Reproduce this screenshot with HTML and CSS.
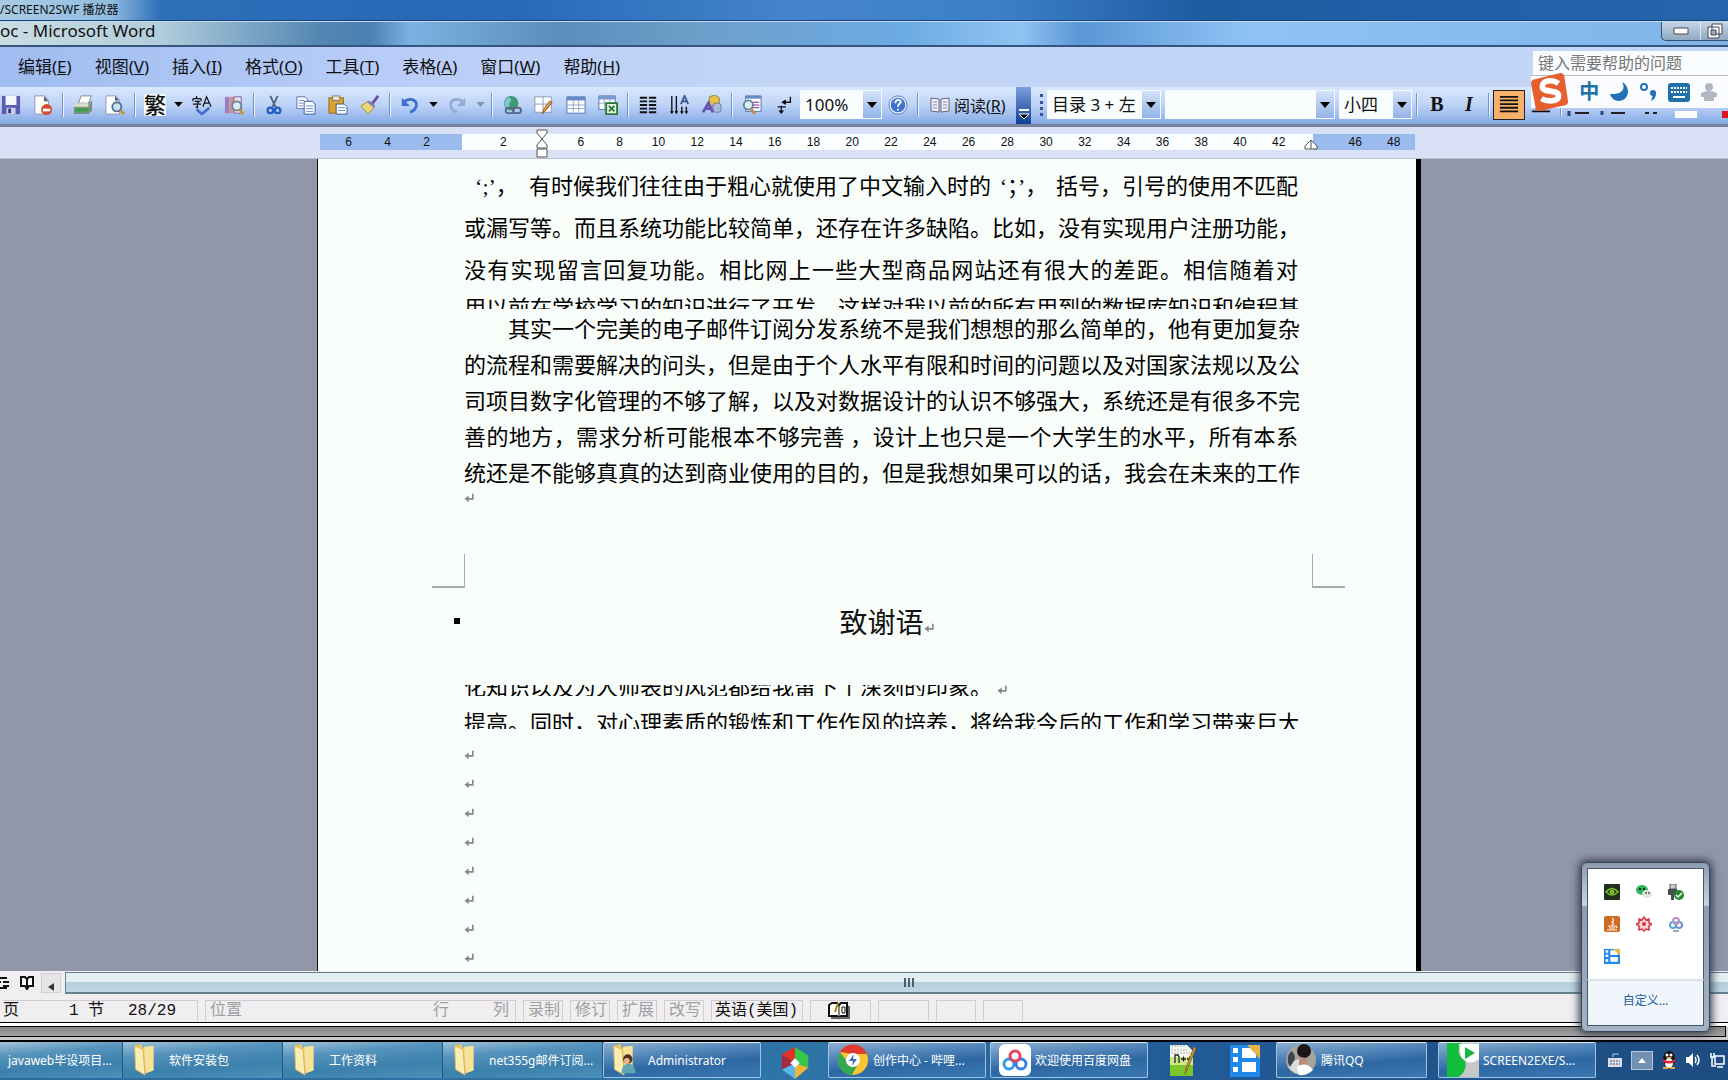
FILE: index.html
```html
<!DOCTYPE html>
<html lang="zh-CN">
<head>
  <meta charset="UTF-8" />
  <meta name="viewport" content="width=device-width, initial-scale=1.0" />
  <title>Microsoft Word</title>
  <link rel="stylesheet" href="styles.css">
</head>
<body>
  <svg class="defs" aria-hidden="true">
    <symbol id="mark" viewBox="0 0 12 12"><path d="M10 1v6H3" fill="none" stroke="#888" stroke-width="2"/><path d="M0 7l5-4v8z" fill="#888"/></symbol>
    <symbol id="down" viewBox="0 0 10 6"><path d="M0 0h10L5 6z"/></symbol>
    <symbol id="folder" viewBox="0 0 24 36">
      <path d="M1 3l8-2v4l12-1v25l-9 3z" fill="#e9c767"/>
      <path d="M11 4l10-1v26l-8 3z" fill="#f7e29a"/>
      <path d="M1 3l9 4 2 27-10-6z" fill="#fbeeb5" stroke="#d9b559"/>
    </symbol>
    <symbol id="npp" viewBox="0 0 28 34">
      <path d="M1 2h17l6 6v25H1z" fill="#f5f9f0"/><path d="M1 21h23v12H1z" fill="#7cc62b"/><path d="M1 14h23v8H1z" fill="#cbe88b"/>
      <path d="M2 3h15M2 7h16M2 10h20" stroke="#aab" stroke-dasharray="2 1"/>
      <path d="M6 20v-8h3l1 2v6M12 16h5m-2.500-2.500v5M18 16h5m-2.500-2.500v5" fill="none" stroke="#222" stroke-width="1.300"/>
      <path d="M27 5l-9 22-2 4 1-6 8-21z" fill="#dba63a" stroke="#8a6420"/>
    </symbol>
    <symbol id="film" viewBox="0 0 30 34">
      <path d="M0 2h30v32H0z" fill="#2088e8"/><path d="M12 5h14v10H12zM12 19h14v10H12z" fill="#fff"/>
      <path d="M3 5h5v5H3zM3 14h5v5H3zM3 24h5v5H3z" fill="#fff"/><path d="M17 2h13v14z" fill="#e8b448"/>
    </symbol>
  </svg>

  <header class="player-title">/SCREEN2SWF 播放器</header>
  <header class="word-title">
    <span>oc - Microsoft Word</span>
    <div class="window-buttons">
      <button aria-label="最小化"><svg width="16" height="8"><path d="M1 1h14v6H1z" fill="#fff" stroke="#445"/></svg></button>
      <button aria-label="还原"><svg width="16" height="16"><path d="M5 1h10v10H5zM1 4h11v11H1z" fill="#fff" stroke="#445"/><path d="M4 7h5v5H4z" fill="#9ab" stroke="#445"/></svg></button>
    </div>
  </header>

  <nav class="menu">
    <button>编辑(<u>E</u>)</button>
    <button>视图(<u>V</u>)</button>
    <button>插入(<u>I</u>)</button>
    <button>格式(<u>O</u>)</button>
    <button>工具(<u>T</u>)</button>
    <button>表格(<u>A</u>)</button>
    <button>窗口(<u>W</u>)</button>
    <button>帮助(<u>H</u>)</button>
    <input class="ask" type="text" aria-label="帮助" placeholder="键入需要帮助的问题">
  </nav>

  <div class="toolbar">
    <button class="tool" aria-label="保存"><svg viewBox="0 0 22 22"><path d="M1 1h20v20H1z" fill="#5a5cb4"/><path d="M5 1h12v10H5z" fill="#f4f6ff"/><path d="M6 14h10v7H6z" fill="#c9cde8"/><path d="M8 15h3v5H8z" fill="#33357c"/></svg></button>
    <button class="tool" aria-label="权限"><svg viewBox="0 0 22 22"><path d="M2 1h11l4 5v15H2z" fill="#fff" stroke="#8b93a8"/><path d="M12 1v6h5z" fill="#54617d"/><circle cx="15" cy="16" r="6" fill="#d8482f"/><path d="M11 15h8v3h-8z" fill="#fff"/></svg></button>
    <i class="sep"></i>
    <button class="tool" aria-label="打印"><svg viewBox="0 0 22 22"><path d="M6 9l3-8h11l-3 8z" fill="#fff" stroke="#788"/><path d="M1 9h16l4-3v11l-4 4H1z" fill="#79907c"/><path d="M1 9h16v4H1z" fill="#d7e0d0"/><path d="M3 15h13v3H3z" fill="#2da443"/></svg></button>
    <button class="tool" aria-label="打印预览"><svg viewBox="0 0 22 22"><path d="M1 1h11l4 5v15H1z" fill="#fff" stroke="#8b93a8"/><path d="M11 1v5h5z" fill="#54617d"/><circle cx="13" cy="13" r="5" fill="#c5e3f3" stroke="#55708f" stroke-width="2"/><path d="M17 17l4 4" stroke="#c9952e" stroke-width="3"/></svg></button>
    <i class="sep"></i>
    <button class="tool"><span class="trad">繁</span></button>
    <svg class="drop"><use href="#down"/></svg>
    <button class="tool" aria-label="拼音指南"><svg viewBox="0 0 22 22"><path d="M1 4h9M5 1v3M1 4v3M10 4v3M3 7h5L6 9v5l-2-1M1 10h9M12 13l4-11 5 11M13 9h6" fill="none" stroke="#111" stroke-width="1.3"/><path d="M5 16l6 5 8-7" fill="none" stroke="#3d70d2" stroke-width="3"/></svg></button>
    <button class="tool" aria-label="信息检索"><svg viewBox="0 0 22 22"><path d="M1 2h5v18H1z" fill="#9b7cc0"/><path d="M6 2h5v18H6z" fill="#d0948e"/><path d="M11 2h8v18h-8z" fill="#e3e3e8" stroke="#859"/><circle cx="14" cy="12" r="5" fill="#d5eaf5" stroke="#6a7e9d" stroke-width="2"/><path d="M17 16l4 5" stroke="#c9952e" stroke-width="3"/></svg></button>
    <i class="sep"></i>
    <button class="tool" aria-label="剪切"><svg viewBox="0 0 22 22"><path d="M7 1l6 13M15 1L9 14" stroke="#4b6680" stroke-width="2"/><circle cx="7" cy="17" r="3" fill="none" stroke="#225fc2" stroke-width="2.5"/><circle cx="15" cy="17" r="3" fill="none" stroke="#225fc2" stroke-width="2.5"/></svg></button>
    <button class="tool" aria-label="复制"><svg viewBox="0 0 22 22"><path d="M1 2h9l3 3v10H1z" fill="#fff" stroke="#4d69ad"/><path d="M9 7h9l3 3v11H9z" fill="#fff" stroke="#2f4f9e"/><path d="M3 6h6M3 9h5M3 12h5M11 12h8M11 15h8M11 18h8" stroke="#5f86cf"/></svg></button>
    <button class="tool" aria-label="粘贴"><svg viewBox="0 0 22 22"><path d="M1 3h16v17H1z" fill="#d8a431" stroke="#8b6518"/><path d="M5 1h8v5H5z" fill="#e9e3cf" stroke="#776"/><path d="M9 10h9l3 3v8H9z" fill="#fff" stroke="#34508d"/><path d="M11 14h8M11 17h8" stroke="#5f86cf"/></svg></button>
    <button class="tool" aria-label="格式刷"><svg viewBox="0 0 22 22"><path d="M20 1l-7 9" stroke="#6d4ca8" stroke-width="3"/><path d="M9 7l7 6-7 8-8-9z" fill="#ecd77a" stroke="#a78932"/><path d="M9 7l7 6" stroke="#7f8aa0" stroke-width="3"/></svg></button>
    <i class="sep"></i>
    <button class="tool" aria-label="撤消"><svg viewBox="0 0 22 22"><path d="M4 8c6-6 15-3 14 4-1 4-4 6-7 7" fill="none" stroke="#3b6fd0" stroke-width="3"/><path d="M2 3v9h9z" fill="#3b6fd0"/></svg></button>
    <svg class="drop"><use href="#down"/></svg>
    <button class="tool" aria-label="恢复"><svg viewBox="0 0 22 22"><path d="M18 8C12 2 3 5 4 12c1 4 4 6 7 7" fill="none" stroke="#94abd3" stroke-width="3"/><path d="M20 3v9h-9z" fill="#94abd3"/></svg></button>
    <svg class="drop dim"><use href="#down"/></svg>
    <i class="sep"></i>
    <button class="tool" aria-label="超链接"><svg viewBox="0 0 22 22"><circle cx="10" cy="9" r="8" fill="#3f9a72"/><path d="M4 5c4-5 8 0 5 3s2 5-2 7C3 14 1 9 4 5z" fill="#7ac7d6"/><rect x="4" y="14" width="9" height="6" rx="3" fill="none" stroke="#566a86" stroke-width="2"/><rect x="12" y="14" width="9" height="6" rx="3" fill="none" stroke="#566a86" stroke-width="2"/></svg></button>
    <button class="tool" aria-label="表格和边框"><svg viewBox="0 0 22 22"><path d="M1 2h18v17H1zM10 2v17M1 10h18" fill="#fff" stroke="#8797b4"/><path d="M20 8l-7 9-4 4 2-6 6-8z" fill="#e2a03b" stroke="#884b2b"/></svg></button>
    <button class="tool" aria-label="插入表格"><svg viewBox="0 0 22 22"><path d="M1 2h20v18H1z" fill="#fff" stroke="#5070a8"/><path d="M1 2h20v4H1z" fill="#648bd0"/><path d="M1 11h20M1 15h20M8 6v14M14 6v14" stroke="#8ba3cb"/></svg></button>
    <button class="tool" aria-label="插入 Excel 表格"><svg viewBox="0 0 22 22"><path d="M1 1h18v15H1z" fill="#fff" stroke="#5070a8"/><path d="M1 1h18v4H1z" fill="#7b9ad0"/><path d="M1 9h18M7 5v11M13 5v11" stroke="#8ba3cb"/><path d="M9 9h12v12H9z" fill="#e7f4e5" stroke="#267a33" stroke-width="2"/><path d="M12 12l6 6M18 12l-6 6" stroke="#267a33" stroke-width="2"/></svg></button>
    <i class="sep"></i>
    <button class="tool" aria-label="分栏"><svg viewBox="0 0 22 22"><path d="M2 3h8M2 7h8M2 11h8M2 15h8M2 19h8M12 3h8M12 7h8M12 11h8M12 15h8M12 19h8" stroke="#111" stroke-width="2"/></svg></button>
    <button class="tool" aria-label="更改文字方向"><svg viewBox="0 0 22 22"><path d="M2 1v19M7 1v19M13 13v7M18 13v7" stroke="#111" stroke-width="1.5"/><path d="M0 18h4l-2 3zM5 18h4l-2 3zM11 18h4l-2 3zM16 18h4l-2 3z"/><path d="M12 10l4-9 4 9M13 7h6" fill="none" stroke="#3a5790" stroke-width="2"/></svg></button>
    <button class="tool" aria-label="绘图"><svg viewBox="0 0 22 22"><path d="M8 2l6-2 5 3v9H8z" fill="#e4c14c" stroke="#9a7b29"/><rect x="12" y="9" width="9" height="10" rx="3" fill="#a9b9da" stroke="#66779c"/><path d="M1 19L7 9l5 10M3 15h7" fill="none" stroke="#6a52bb" stroke-width="3"/></svg></button>
    <i class="sep"></i>
    <button class="tool" aria-label="文档结构图"><svg viewBox="0 0 22 22"><path d="M4 1h17v17H4z" fill="#fff" stroke="#4d6ea7"/><path d="M4 1h17v3H4z" fill="#638ac6"/><path d="M12 8h7M12 11h7M12 14h7" stroke="#718"/><circle cx="7" cy="11" r="5" fill="#d9eef5" stroke="#5d829a" stroke-width="2"/><path d="M10 15l4 6" stroke="#bf9140" stroke-width="3"/></svg></button>
    <button class="tool" aria-label="显示编辑标记"><svg viewBox="0 0 22 22"><path d="M18 2v6h-7M8 12v6M4 13h9" fill="none" stroke="#111" stroke-width="1.500"/><path d="M8 8l5-3v6zM8 21l-3-4h6z"/></svg></button>
    <div class="combo zoom"><select aria-label="显示比例"><option>100%</option></select><span><svg class="arrow"><use href="#down"/></svg></span></div>
    <button class="tool" aria-label="帮助"><svg viewBox="0 0 22 22"><circle cx="11" cy="11" r="9" fill="#3d72cf" stroke="#e9f2ff" stroke-width="2"/><circle cx="11" cy="11" r="10" fill="none" stroke="#4f79b8"/><path d="M8 9c0-5 7-4 6-1-1 2-3 2-3 5M11 15v2" fill="none" stroke="#fff" stroke-width="2"/></svg></button>
    <i class="sep"></i>
    <button class="read"><svg viewBox="0 0 20 18"><path d="M1 2l8 1v13l-8-1zM19 2l-8 1v13l8-1z" fill="#eef" stroke="#667"/><path d="M3 6h4M3 9h4M3 12h4M13 6h4M13 9h4M13 12h4" stroke="#889"/></svg><span>阅读(<u>R</u>)</span></button>
    <button class="overflow" aria-label="工具栏选项"><svg width="10" height="11"><path d="M0 1h10" stroke="#fff" stroke-width="2"/><path d="M0 5h10l-5 5z" stroke="#fff"/></svg></button>
    <i class="grip"></i>
    <div class="combo style"><select aria-label="样式"><option>目录 3 + 左</option></select><span><svg class="arrow"><use href="#down"/></svg></span></div>
    <div class="combo font"><select aria-label="字体"><option></option></select><span><svg class="arrow"><use href="#down"/></svg></span></div>
    <div class="combo size"><select aria-label="字号"><option>小四</option></select><span><svg class="arrow"><use href="#down"/></svg></span></div>
    <i class="sep"></i>
    <button class="tool bold">B</button>
    <button class="tool italic">I</button>
    <i class="sep"></i>
    <button class="tool active" aria-label="两端对齐"><svg viewBox="0 0 22 22"><path d="M1 2h20M1 6h20M1 10h20M1 14h20M1 18h20" stroke="#111" stroke-width="2"/></svg></button>
    <button class="tool" aria-label="居中"><svg viewBox="0 0 22 22"><path d="M1 2h20M5 6h12M1 10h20M5 14h12M1 18h20" stroke="#111" stroke-width="2"/></svg></button>
    <i class="sep"></i>
    <svg class="hidden-tools" width="170" height="12"><path d="M10 3h14M46 3h14M80 3h4M88 3h4" stroke="#222" stroke-width="2"/><path d="M4 1v5M37 1v4" stroke="#347" stroke-width="3"/><path d="M110 1h22v7h-22z" fill="#fff"/><path d="M157 1h13v7h-13z" fill="#dc1420"/></svg>
  </div>

  <div class="ime">
    <svg class="sogou" viewBox="0 0 40 42"><path d="M2 8L31 1q3 0 4 3l4 27q0 3-3 4L9 41q-3 0-4-3L0 12q0-3 2-4z" fill="#e5602e"/><path d="M29 12c-7-5-18-3-17 4 1 6 17 2 17 9 0 6-11 7-18 3" fill="none" stroke="#fff" stroke-width="6"/></svg>
    <b>中</b>
    <svg width="20" height="22"><path d="M13 1c4 7 0 13-12 12 3 10 17 9 18-2 0-4-2-8-6-10z" fill="#2270b8"/></svg>
    <svg width="18" height="20"><circle cx="4" cy="5" r="3" fill="none" stroke="#2270b8" stroke-width="2"/><circle cx="13" cy="11" r="3" fill="#2270b8"/><path d="M16 11q0 6-5 8l2-6z" fill="#2270b8"/></svg>
    <svg width="22" height="19"><rect width="22" height="19" rx="3" fill="#2270a8"/><path d="M3 5h16M3 9h16" stroke="#fff" stroke-width="2" stroke-dasharray="2 1"/><path d="M5 14h12" stroke="#fff" stroke-width="2"/></svg>
    <svg width="18" height="20"><circle cx="9" cy="5" r="4" fill="#b3b7c4"/><path d="M1 11q8-4 16 0v4h-3v4H4v-4H1z" fill="#b3b7c4"/></svg>
  </div>

  <div class="ruler">
    <div class="scale">
      <div class="outside before"><span>6</span><span>4</span><span>2</span></div>
      <div class="inside">
        <span>2</span>
        <span class="indent"><svg width="12" height="29"><path d="M1 1h10v3L6 10 1 4zM1 19v-3l5-6 5 6v3zM1 20h10v8H1z" fill="#fff" stroke="#555"/></svg></span>
        <span>6</span><span>8</span><span>10</span><span>12</span><span>14</span><span>16</span><span>18</span><span>20</span><span>22</span><span>24</span><span>26</span><span>28</span><span>30</span><span>32</span><span>34</span><span>36</span><span>38</span><span>40</span><span>42</span>
      </div>
      <div class="outside after"><svg class="right-indent" width="14" height="11"><path d="M1 10V7l6-6 6 6v3z" fill="#fff" stroke="#555"/><path d="M7 1v9" stroke="#555"/></svg><span>46</span><span>48</span></div>
    </div>
  </div>

  <main class="workspace">
    <article class="page">
      <p class="line wide"><span class="quote">‘;’，</span>有时候我们往往由于粗心就使用了中文输入时的<span class="quote">‘；’，</span>括号，引号的使用不匹配</p>
      <p class="line wide">或漏写等。而且系统功能比较简单，还存在许多缺陷。比如，没有实现用户注册功能，</p>
      <p class="line wide">没有实现留言回复功能。相比网上一些大型商品网站还有很大的差距。相信随着对</p>
      <p class="line cut">用以前在学校学习的知识进行了开发，这样对我以前的所有用到的数据库知识和编程基</p>
      <p class="line first">其实一个完美的电子邮件订阅分发系统不是我们想想的那么简单的，他有更加复杂</p>
      <p class="line">的流程和需要解决的问头，但是由于个人水平有限和时间的问题以及对国家法规以及公</p>
      <p class="line">司项目数字化管理的不够了解，以及对数据设计的认识不够强大，系统还是有很多不完</p>
      <p class="line">善的地方，需求分析可能根本不够完善 ，设计上也只是一个大学生的水平，所有本系</p>
      <p class="line">统还是不能够真真的达到商业使用的目的，但是我想如果可以的话，我会在未来的工作</p>
      <p class="empty short"><svg class="mark"><use href="#mark"/></svg></p>
      <div class="corners"><i></i><i></i></div>
      <h1>致谢语<svg class="mark"><use href="#mark"/></svg></h1>
      <p class="line tail"><span>化知识以及为人师表的风范都给我留下了深刻的印象。<svg class="mark"><use href="#mark"/></svg></span></p>
      <p class="line cut second">提高。同时，对心理素质的锻炼和工作作风的培养，将给我今后的工作和学习带来巨大</p>
      <p class="empty"><svg class="mark"><use href="#mark"/></svg></p>
      <p class="empty"><svg class="mark"><use href="#mark"/></svg></p>
      <p class="empty"><svg class="mark"><use href="#mark"/></svg></p>
      <p class="empty"><svg class="mark"><use href="#mark"/></svg></p>
      <p class="empty"><svg class="mark"><use href="#mark"/></svg></p>
      <p class="empty"><svg class="mark"><use href="#mark"/></svg></p>
      <p class="empty"><svg class="mark"><use href="#mark"/></svg></p>
      <p class="empty"><svg class="mark"><use href="#mark"/></svg></p>
    </article>
  </main>

  <div class="scroll">
    <svg width="9" height="14"><path d="M0 2h7M3 6h6M0 6h1M3 10h6M0 12h7" stroke="#111" stroke-width="2"/></svg>
    <svg width="14" height="14"><path d="M1 1h4l2 2 2-2h4v9H9l-2 3-2-3H1z" fill="#fff" stroke="#111" stroke-width="2"/><path d="M7 3v10" stroke="#111" stroke-width="2"/></svg>
    <button aria-label="向左滚动"><svg width="6" height="8"><path d="M6 0v8L0 4z" fill="#333"/></svg></button>
    <div class="thumb"><i></i><i></i><i></i></div>
  </div>

  <footer class="status">
    <div class="panel pages"><span>页</span><span>1 节</span><span>28/29</span></div>
    <div class="panel place dim"><span>位置</span><span>行</span><span>列</span></div>
    <div class="panel dim">录制</div>
    <div class="panel dim">修订</div>
    <div class="panel dim">扩展</div>
    <div class="panel dim">改写</div>
    <div class="panel lang">英语(美国)</div>
    <div class="panel book"><svg width="24" height="18"><path d="M2 3l3-2h5l2 2 2-2h6v13h-6l-2 2-2-2H2z" fill="#fff" stroke="#111" stroke-width="2"/><path d="M22 4v12H4" fill="none" stroke="#666" stroke-width="2"/><path d="M12 3v12" stroke="#111"/><path d="M15 5h3v6h-3z" fill="none" stroke="#111"/><path d="M11 1L8 10" stroke="#a80" stroke-width="2"/></svg></div>
    <div class="panel blank"></div>
    <div class="panel small"></div>
    <div class="panel small"></div>
  </footer>
  <div class="frame"><i></i></div>

  <nav class="taskbar">
    <button class="task flat head">javaweb毕设项目...</button>
    <button class="task flat"><svg class="dir"><use href="#folder"/></svg>软件安装包</button>
    <button class="task flat"><svg class="dir"><use href="#folder"/></svg>工作资料</button>
    <button class="task flat"><svg class="dir"><use href="#folder"/></svg>net355g邮件订阅...</button>
    <button class="task admin"><svg class="dir" viewBox="0 0 24 36"><use href="#folder"/><circle cx="16" cy="17" r="5" fill="#4d3524"/><path d="M9 32q1-10 8-10t7 10z" fill="#5fa9b5"/><circle cx="15" cy="19" r="3" fill="#e8b48d"/></svg>Administrator</button>
    <button class="pin wide" aria-label="浏览器"><svg width="30" height="34" viewBox="0 0 30 36"><path d="M15 18V1L1 9z" fill="#e33127"/><path d="M15 18V1l14 9v13z" fill="#35c84b"/><path d="M15 18l14 5-14 12z" fill="#f2b431"/><path d="M15 18v17L1 25z" fill="#58b9ee"/><path d="M15 18L1 9v16z" fill="#a32b3d"/><path d="M15 13l5 5-5 5-5-5z" fill="#fff"/></svg></button>
    <button class="task chrome"><svg width="32" height="34" viewBox="0 0 32 34"><circle cx="16" cy="17" r="15" fill="#f6c531"/><path d="M3 9A15 15 0 0 1 30 11H16z" fill="#df3b2f"/><path d="M3 9a15 15 0 0 0 12 23l6-11-12-4z" fill="#36a852"/><circle cx="16" cy="17" r="7" fill="#fff"/><path d="M17 11l-5 7h4l-1 5 5-7h-4z" fill="#3a6fb8"/></svg>创作中心 - 哔哩...</button>
    <button class="task pan"><svg width="32" height="34"><rect y="1" width="32" height="32" rx="6" fill="#fff"/><g fill="none" stroke-width="3"><circle cx="10" cy="21" r="5" stroke="#2d9be8"/><circle cx="22" cy="21" r="5" stroke="#3a7fe0"/><circle cx="16" cy="13" r="5" stroke="#e5445a"/></g></svg>欢迎使用百度网盘</button>
    <button class="pin" aria-label="Notepad++"><svg width="28" height="34"><use href="#npp"/></svg></button>
    <button class="pin" aria-label="视频"><svg width="30" height="34"><use href="#film"/></svg></button>
    <button class="task qq"><svg width="32" height="34"><circle cx="16" cy="17" r="15" fill="#a8a49c"/><path d="M3 24q7-9 13-8l6 15q-10 3-19-7z" fill="#ddd"/><circle cx="19" cy="8" r="7" fill="#1b1717"/><path d="M14 14l7 1 2 8-9-1z" fill="#b88f7b"/><path d="M12 24q9-6 16 3-6 6-14 5z" fill="#fff"/><path d="M6 8q4 2 4 8l-5 8q-5-9 1-16z" fill="#40444c"/></svg>腾讯QQ</button>
    <button class="task rec"><svg width="32" height="36"><path d="M0 0h32v36H0z" fill="#c5c8c6"/><path d="M0 0h15q-8 12 3 18 3 12-8 18H0z" fill="#12bf3c"/><path d="M12 2h20v15q-10 8-18-2z" fill="#fff"/><path d="M18 5v12l10-6z" fill="#16b544"/></svg>SCREEN2EXE/S...</button>
    <div class="tray">
      <svg width="16" height="16"><path d="M1 6h14v9H1z" fill="#dde"/><path d="M3 9h10M3 12h10" stroke="#456" stroke-dasharray="2 1"/><path d="M6 5V2h6" fill="none" stroke="#ccd"/></svg>
      <button aria-label="显示隐藏的图标"><svg width="8" height="5"><path d="M4 0l4 5H0z" fill="#fff"/></svg></button>
      <svg width="16" height="18"><ellipse cx="8" cy="8" rx="6" ry="8" fill="#151515"/><ellipse cx="8" cy="12" rx="4" ry="5" fill="#fff"/><path d="M2 8q6 4 12 0v3q-6 3-12 0z" fill="#d9252b"/><circle cx="6" cy="4" r="1.5" fill="#fff"/><circle cx="10" cy="4" r="1.5" fill="#fff"/><path d="M5 6h6l-3 2zM2 16h5v2H2zM9 16h5v2H9z" fill="#f0a92b"/></svg>
      <svg width="16" height="16"><path d="M1 5h3l4-4v14l-4-4H1z" fill="#fff"/><path d="M10 5q2 3 0 6M12 3q4 5 0 10" fill="none" stroke="#fff" stroke-width="1.5"/></svg>
      <svg width="16" height="16"><path d="M6 4h9v8H6zM8 15h6M2 1v4M5 1v4M1 5h5M3 5v9h4" fill="none" stroke="#fff" stroke-width="1.5"/></svg>
    </div>
  </nav>

  <aside class="tray-popup">
    <div class="tray-grid">
      <svg viewBox="0 0 16 16"><rect width="16" height="16" rx="1" fill="#22301a"/><path d="M2 8q6-7 12 0-6 6-12 0z" fill="none" stroke="#79b82a" stroke-width="1.5"/><circle cx="8" cy="8" r="2.5" fill="#79b82a"/></svg>
      <svg viewBox="0 0 16 16"><ellipse cx="6" cy="6" rx="6" ry="5" fill="#2fb560"/><ellipse cx="11" cy="10" rx="5" ry="4" fill="#dbe7e0"/><circle cx="4" cy="5" r="1"/><circle cx="8" cy="5" r="1"/><circle cx="10" cy="9" r=".8"/><circle cx="13" cy="9" r=".8"/></svg>
      <svg viewBox="0 0 16 16"><path d="M2 0h6v5H2z" fill="#ccc" stroke="#555"/><path d="M0 5h9v6H6v5H3v-5H0z" fill="#4c4f50"/><circle cx="11" cy="11" r="5" fill="#228a2c"/><path d="M8 11l2 2 4-4" fill="none" stroke="#fff" stroke-width="1.5"/></svg>
      <svg viewBox="0 0 16 16"><rect width="16" height="16" rx="2" fill="#d06a22"/><path d="M8 2q3 2 0 4 3 1 0 3M4 10h7M5 12h6M3 14h10M11 10q3 0 1 2" fill="none" stroke="#fff" stroke-width="1.2"/></svg>
      <svg viewBox="0 0 16 16"><path d="M8 1l2 3 3-1v4l3 1-3 2v4l-3-1-2 2-2-2-3 1v-4L0 8l3-1V3l3 1z" fill="#f6d5d7" stroke="#d23944" stroke-width="1.500"/><circle cx="8" cy="8" r="2" fill="#d23944"/></svg>
      <svg viewBox="0 0 16 16"><g fill="none" stroke-width="2"><circle cx="5" cy="9" r="3" stroke="#58a7dc"/><circle cx="11" cy="9" r="3" stroke="#6c8fd2"/><circle cx="8" cy="5" r="3" stroke="#b797be"/></g><path d="M5 15h6" stroke="#456"/></svg>
      <svg viewBox="0 0 30 34" preserveAspectRatio="none"><use href="#film"/></svg>
    </div>
    <a href="#">自定义...</a>
  </aside>
</body>
</html>
```
FILE: styles.css
```css
* {
  box-sizing: border-box;
}

body {
  margin: 0;
  height: 100vh;
  display: flex;
  flex-direction: column;
  position: relative;
  overflow: hidden;
  background: #d9e1f7;
  font-family: "Noto Sans", "Noto Sans CJK SC", sans-serif;
  color: #111;
}

button {
  border: 0;
  padding: 0;
  background: none;
  font: inherit;
  color: inherit;
  flex: none;
  white-space: nowrap;
}

p,
h1 {
  margin: 0;
}

.defs {
  position: absolute;
  width: 0;
  height: 0;
}

/* title bars */
.player-title {
  flex: none;
  height: 21px;
  border-bottom: 1px solid #123f7d;
  background: linear-gradient(90deg, #a9cbe3 0, #92bde0 110px, #2d6fb8 160px, #2768b7 500px, #4585cd 800px, #3c7fc8 1000px, #1e5ca2 1200px, #2565ad 100%);
  font-size: 12px;
  line-height: 20px;
}

.word-title {
  flex: none;
  height: 26px;
  display: flex;
  justify-content: space-between;
  border-top: 1px solid #c5dcef;
  border-bottom: 2px solid #35557f;
  background: linear-gradient(90deg, #c9dde2 0, #b2cddc 160px, #7ba5c6 250px, #5587b3 320px, #4a7fb3 370px, #7ab2e1 410px, #5c8dbb 560px, #6d9fca 700px, #6caae3 900px, #8fc4f2 1020px, #5b97d6 1080px, #8fc3f5 1250px, #7fb4ea 100%);
  font-size: 17px;
  line-height: 18px;
}

.window-buttons {
  display: flex;
  height: 19px;
  border: 1px solid #34506f;
  border-top: 0;
  border-right: 0;
  border-radius: 0 0 0 5px;
  background: linear-gradient(#c5d6e6, #8fa9c2);
}

.window-buttons button {
  width: 38px;
  display: flex;
  align-items: center;
  justify-content: center;
}

.window-buttons button + button {
  width: 28px;
  border-left: 1px solid #dbe7f1;
}

/* menu */
.menu {
  flex: none;
  height: 40px;
  display: flex;
  align-items: center;
  gap: 23px;
  padding: 0 0 4px 18px;
  background: linear-gradient(90deg, #9fbdf0, #b9cdf8 400px, #c3d6f7 800px);
  font-size: 17px;
}

.ask {
  align-self: flex-end;
  margin-left: auto;
  width: 195px;
  height: 32px;
  padding: 0 5px 8px;
  border: 0;
  background: #fafdff;
  font: inherit;
  font-size: 16px;
}

.ask::placeholder {
  color: #777;
  opacity: 1;
}

/* toolbar */
.toolbar {
  flex: none;
  height: 40px;
  display: flex;
  align-items: center;
  padding-bottom: 2px;
  overflow: hidden;
  border-bottom: 3px solid #77839f;
  background: linear-gradient(#d9e8fd, #bdd2f7 50%, #84aae6);
}

.tool {
  width: 32px;
  height: 30px;
  display: flex;
  align-items: center;
  justify-content: center;
}

.tool svg {
  width: 20px;
  height: 20px;
}

.tool:first-child {
  margin-left: -5px;
}

.trad {
  height: 22px;
  background: #f6fafc;
  font-size: 22px;
  line-height: 20px;
  font-weight: 500;
}

.bold,
.italic {
  font-family: "Liberation Serif", serif;
  font-size: 20px;
  font-weight: bold;
}

.italic {
  font-style: italic;
}

.active {
  border: 1px solid #222;
  background: #f5b06a;
}

.sep {
  flex: none;
  width: 2px;
  height: 24px;
  margin: 0 3px;
  background: linear-gradient(90deg, #6f95d0 50%, #eef5ff 50%);
}

.drop {
  flex: none;
  width: 9px;
  height: 5px;
  margin: 0 3px;
}

.drop.dim {
  fill: #8393b5;
}

.combo {
  flex: none;
  display: flex;
  height: 29px;
  margin-right: 4px;
  border: 1px solid #f4f9ff;
  background: #fafdfd;
}

.combo select {
  flex: 1;
  min-width: 0;
  border: 0;
  padding: 0 4px;
  appearance: none;
  background: none;
  font: inherit;
  font-size: 17px;
  color: #111;
}

.combo span {
  width: 18px;
  display: flex;
  align-items: center;
  justify-content: center;
  background: linear-gradient(#d3e2f9, #93b3e6);
}

.arrow {
  width: 10px;
  height: 6px;
}

.zoom {
  width: 82px;
  margin: 0;
}

.style {
  width: 114px;
}

.font {
  width: 170px;
}

.size {
  width: 73px;
  margin-right: 1px;
}

.read {
  display: flex;
  align-items: center;
  gap: 4px;
  width: 94px;
  padding-left: 8px;
  font-size: 16px;
}

.read svg {
  width: 20px;
  height: 18px;
}

.overflow {
  align-self: stretch;
  width: 15px;
  height: 37px;
  display: flex;
  align-items: flex-end;
  justify-content: center;
  padding-bottom: 4px;
  background: linear-gradient(#7ba0dc, #0f3f94);
}

.grip {
  flex: none;
  height: 22px;
  margin: 0 4px 0 9px;
  border-left: 3px dotted #34579c;
}

.hidden-tools {
  flex: none;
  align-self: flex-end;
}

/* input method bar floats over the toolbar */
.ime {
  position: absolute;
  top: 75px;
  right: 0;
  width: 197px;
  height: 33px;
  display: flex;
  align-items: center;
  justify-content: space-between;
  padding-right: 10px;
  border-top: 1px solid #bbb;
  background: #fafcff;
}

.ime b {
  font-size: 20px;
  line-height: 30px;
  color: #2270a8;
}

.sogou {
  width: 38px;
  height: 40px;
}

/* ruler and page share the same centred column */
.ruler,
.workspace {
  display: grid;
  grid-template-columns: 1fr 1104px 1fr;
  padding-left: 10px;
}

.ruler {
  flex: none;
  height: 32px;
  background: #d9e1f7;
  border-bottom: 1px solid #b9c0d6;
}

.scale {
  grid-column: 2;
  display: flex;
  height: 16px;
  margin: 7px 6px 0 3px;
  font-family: "Liberation Sans", sans-serif;
  font-size: 12px;
  line-height: 16px;
  text-align: center;
}

.scale span {
  flex: 1;
}

.outside {
  position: relative;
  display: flex;
  background: #9bbaed;
}

.before {
  width: 142px;
  padding: 0 16px 0 9px;
}

.inside {
  flex: 1;
  display: flex;
  padding: 0 15px 0 22px;
  background: #fbfeff;
}

.after {
  width: 102px;
  padding: 0 2px 0 23px;
}

.indent {
  position: relative;
}

.indent svg {
  position: absolute;
  left: 13px;
  top: -5px;
}

.right-indent {
  position: absolute;
  left: -9px;
  top: 5px;
}

/* document */
.workspace {
  flex: 1;
  min-height: 0;
  overflow: hidden;
  background: #9196a9;
}

.page {
  grid-column: 2;
  padding: 4px 118px 0 146px;
  border-left: 1px solid #111;
  border-right: 5px solid #000;
  background: #f8fdf9;
}

.line {
  height: 36px;
  font-family: "Noto Sans CJK SC", sans-serif;
  font-size: 22px;
  line-height: 36px;
  white-space: nowrap;
  text-align: justify;
  text-align-last: justify;
  color: #000;
}

.wide {
  height: 42px;
  line-height: 42px;
}

.quote {
  display: inline-block;
  width: 65px;
  font-family: "Liberation Serif", "Noto Sans CJK SC", serif;
  text-align: center;
  text-align-last: center;
}

.cut {
  height: 13px;
  margin: 7px 0 0;
  line-height: 20px;
  overflow: hidden;
}

.cut.second {
  height: 18px;
  margin: 15px 0 11px;
}

.first {
  padding-left: 44px;
}

.tail {
  height: 11px;
  margin-top: 44px;
  display: flex;
  align-items: flex-end;
  line-height: 22px;
  overflow: hidden;
}

.mark {
  width: 11px;
  height: 10px;
}

.tail .mark {
  margin-left: 5px;
}

.empty {
  height: 29px;
  display: flex;
  align-items: center;
}

.short {
  height: 18px;
}

.corners {
  display: flex;
  justify-content: space-between;
  height: 34px;
  margin: 47px -47px 0 -32px;
}

.corners i {
  width: 33px;
  border: solid #a9acaa;
  border-width: 0 1px 2px 0;
}

.corners i + i {
  border-width: 0 0 2px 1px;
}

h1 {
  position: relative;
  height: 40px;
  margin-top: 13px;
  padding-left: 12px;
  font-family: "Noto Sans CJK SC", sans-serif;
  font-size: 28px;
  font-weight: 400;
  line-height: 40px;
  text-align: center;
}

h1::before {
  content: "";
  position: absolute;
  left: -10px;
  top: 17px;
  width: 6px;
  height: 6px;
  background: #000;
}

/* horizontal scroll bar */
.scroll {
  flex: none;
  height: 26px;
  display: flex;
  align-items: center;
  padding-bottom: 3px;
  background: #f0eef0;
}

.scroll > svg + svg {
  margin-left: 11px;
}

.scroll button {
  width: 20px;
  height: 20px;
  margin: 0 4px 0 7px;
  border: 1px solid #d0d0d0;
  background: #e6e6e8;
}

.thumb {
  flex: 1;
  height: 22px;
  margin-right: -24px;
  display: flex;
  align-items: center;
  justify-content: center;
  gap: 2px;
  border: 1px solid #66808f;
  border-width: 1px 0 2px 1px;
  background: linear-gradient(#e2eef2 45%, #b3cfdb 46%, #bfd6e2);
}

.thumb i {
  width: 2px;
  height: 9px;
  background: #46606e;
}

/* status bar */
.status {
  flex: none;
  height: 25px;
  display: flex;
  align-items: flex-end;
  gap: 7px;
  padding: 0 0 1px 3px;
  background: #f0eef0;
  font-family: "Liberation Mono", "Noto Sans CJK SC", monospace;
  font-size: 16px;
}

.panel {
  flex: none;
  width: 40px;
  height: 21px;
  padding-left: 4px;
  border: 1px solid #cfcdd0;
  border-width: 1px 1px 0 1px;
  line-height: 21px;
  white-space: nowrap;
}

.panel.dim {
  color: #a09ea2;
}

.pages {
  width: 195px;
  display: flex;
  padding: 0 21px 0 0;
  border-left: 0;
  justify-content: space-between;
}

.pages span:first-child {
  margin-right: 26px;
}

.place {
  width: 311px;
  display: flex;
}

.place span:nth-child(2) {
  margin-left: auto;
}

.place span:last-child {
  margin: 0 6px 0 44px;
}

.lang {
  width: 92px;
  padding-left: 3px;
}

.book {
  width: 61px;
  padding: 1px 0 0 16px;
}

.book svg {
  display: block;
}

.blank {
  width: 51px;
}

.frame {
  flex: none;
  height: 20px;
  padding-top: 3px;
  border-top: 1px solid #000;
  border-bottom: 2px solid #000;
  background: linear-gradient(#fff 3px, #cfc9d0 4px);
}

.frame i {
  display: block;
  height: 11px;
  margin-right: 2px;
  border: 1px solid #000;
  border-left: 0;
  background: linear-gradient(#858484, #a4a2a2);
}

/* taskbar */
.taskbar {
  flex: none;
  height: 38px;
  display: flex;
  padding-bottom: 2px;
  background: linear-gradient(90deg, #2a6b9f, #2f74a6 800px, #215a97 1200px, #1d4c80);
  font-size: 12px;
  color: #fff;
}

.task {
  width: 158px;
  display: flex;
  align-items: center;
  gap: 4px;
  padding-left: 8px;
  margin-right: 4px;
  border: 1px solid #9fc3e0;
  border-top-color: #dbe9f3;
  border-radius: 2px;
  background: linear-gradient(175deg, #8fb0cf 0, #4f84b8 35%, #2e68a3 60%, #3a78b2);
  overflow: hidden;
}

.task svg {
  flex: none;
}

.flat {
  width: 160px;
  margin: 0;
  padding-left: 10px;
  border: 0;
  border-right: 1px solid #24567f;
  border-radius: 0;
  background: linear-gradient(175deg, #a4c3da 0, #5694bd 30%, #3c80ac 65%, #4b91b8);
}

.head {
  width: 123px;
  padding-left: 8px;
}

.dir {
  width: 24px;
  height: 34px;
  margin-right: 8px;
}

.admin {
  margin: 0;
}

.pin {
  width: 62px;
  display: flex;
  align-items: center;
  justify-content: center;
}

.pin.wide {
  width: 67px;
}

.qq {
  width: 151px;
  margin-right: 11px;
}

.tray {
  display: flex;
  align-items: center;
  gap: 8px;
  margin-left: auto;
  padding-right: 3px;
}

.tray button {
  width: 22px;
  height: 19px;
  border: 1px solid #b5c9dd;
  background: #7190b3;
  display: flex;
  align-items: center;
  justify-content: center;
}

/* hidden icons popup */
.tray-popup {
  position: absolute;
  right: 18px;
  bottom: 48px;
  width: 129px;
  height: 170px;
  display: flex;
  flex-direction: column;
  border: 1px solid #37455a;
  border-radius: 6px;
  padding: 5px;
  background: linear-gradient(#8d9bb0, #c8d5e3 25%, #8c9db2 26%, #a3b3c6);
  box-shadow: 0 0 8px 2px #333a4a;
}

.tray-grid {
  flex: 1;
  display: grid;
  grid-template-columns: repeat(3, 16px);
  grid-auto-rows: 16px;
  gap: 16px;
  padding: 15px 16px;
  border: 1px solid #46566b;
  border-bottom: 0;
  background: #fff;
}

.tray-grid svg {
  width: 16px;
  height: 16px;
}

.tray-popup a {
  height: 47px;
  border: 1px solid #46566b;
  border-top: 2px solid #dbe1ea;
  background: #f0f5fc;
  font-size: 12px;
  line-height: 40px;
  text-align: center;
  text-decoration: none;
  color: #1d5fa0;
}
```
